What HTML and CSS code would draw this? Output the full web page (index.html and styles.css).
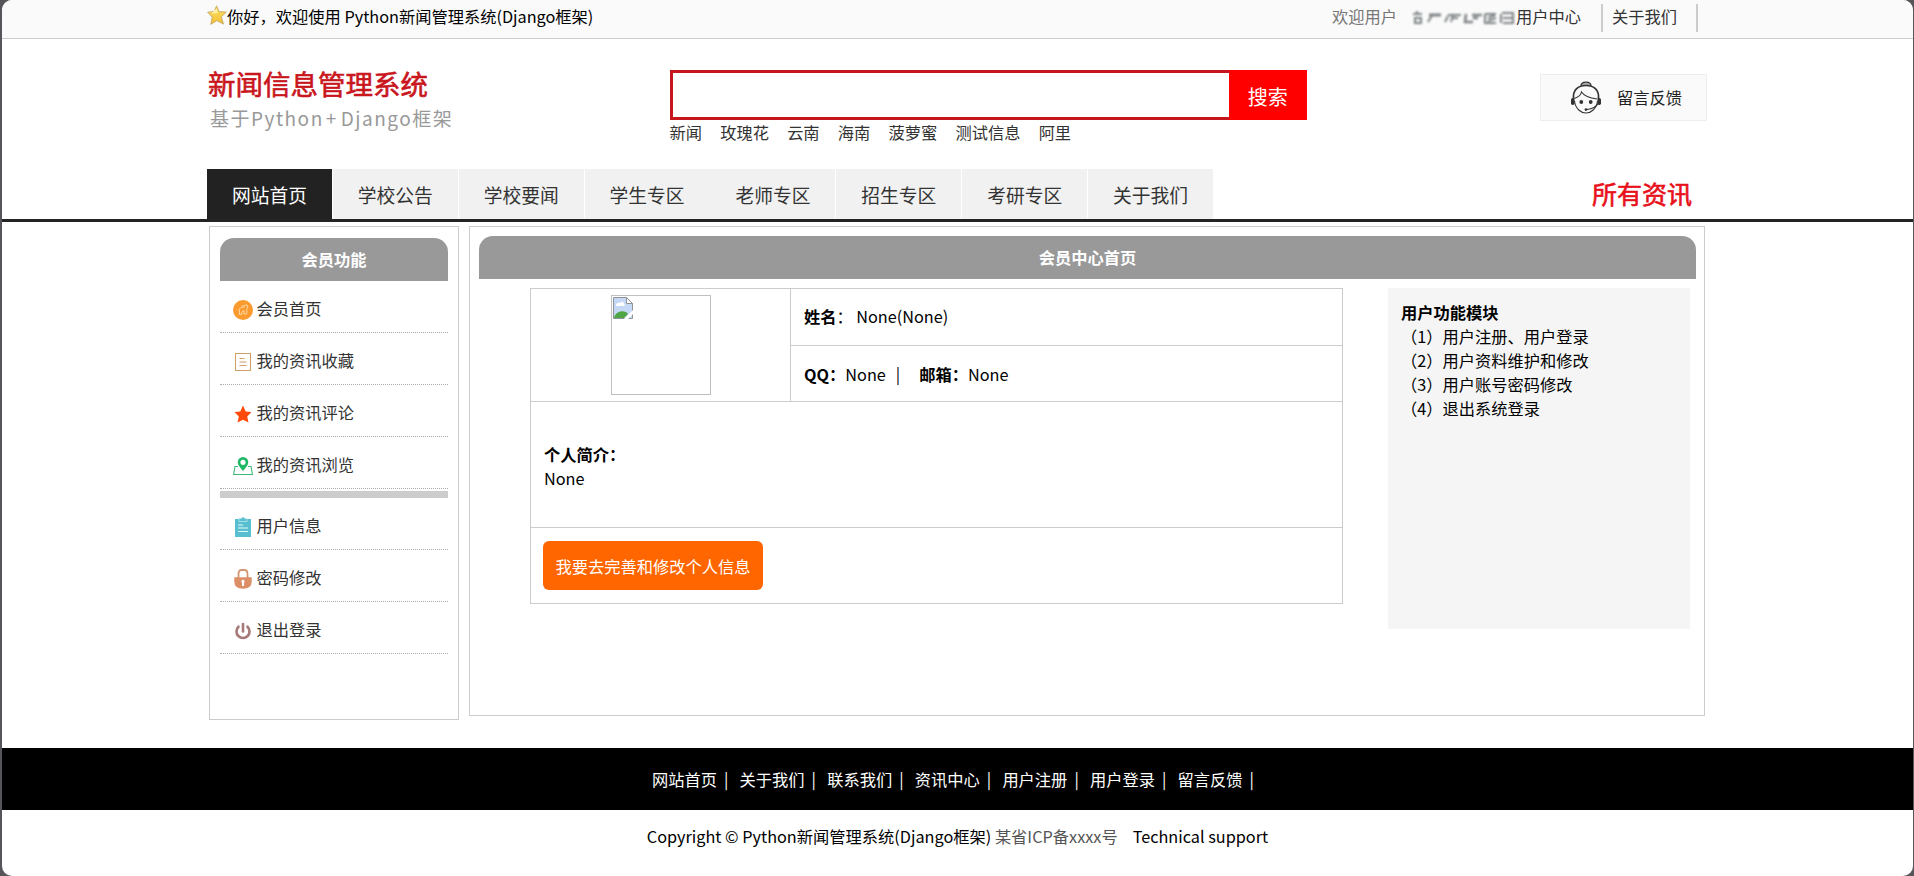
FILE: index.html
```html
<!DOCTYPE html>
<html lang="zh-CN">
<head>
<meta charset="utf-8">
<title>会员中心首页</title>
<link rel="stylesheet" href="styles.css">
</head>
<body>
<div class="window">
<div class="page">
  <div class="topbar">
    <div class="wrap topbar-in">
      <div class="hello">
        <svg class="star" viewBox="0 0 20 20"><defs><linearGradient id="gold" x1="0" y1="0" x2="0" y2="1"><stop offset="0" stop-color="#fbe36a"/><stop offset="1" stop-color="#f5bd30"/></linearGradient></defs><path d="M9.600 .8l2.500 5.900 7.200.3-5 4.900 2.200 7.200-6.700-3.500-6 3.700 1.500-7.200L.7 7.300l6.400-.8z" fill="url(#gold)" stroke="#c4a763" stroke-width=".9"/><path d="M9.500 3.500l1.300 4.600-6.500.3z" fill="#fff3a8"/></svg>
        <span>你好，欢迎使用 Python新闻管理系统(Django框架)</span>
      </div>
      <div class="user">
        <span class="welcome">欢迎用户</span>
        <svg class="smudge" viewBox="0 0 104 16"><g fill="none" stroke="#7d8284" stroke-width="2"><path d="M1 4h9M5 1v4M2 8h7v5H3V8" /><path d="M17 5h12" stroke-width="3"/><path d="M20 5l-4 7M33 12l3-6M36 5h13M41 5l-2 7M40 8h6"/><path d="M54 4l-1 8h8M60 5h10M61 8h5" stroke-width="2.500"/><path d="M73 4h11M73 4v9h11M76 8l7-3M76 11l8-3"/><path d="M90 3h11v10H91M91 8h9M89 4v9"/></g></svg>
        <a class="u1">用户中心</a><i class="bar"></i><a class="u2">关于我们</a><i class="bar"></i>
      </div>
    </div>
  </div>

  <div class="wrap header">
    <div class="logo"><div class="logo-t">新闻信息管理系统</div><div class="logo-s">基于Python<span>+</span>Django框架</div></div>
    <div class="search">
      <div class="search-row"><div class="search-input"></div><div class="search-btn">搜索</div></div>
      <div class="keys"><a>新闻</a><a>玫瑰花</a><a>云南</a><a>海南</a><a>菠萝蜜</a><a>测试信息</a><a>阿里</a></div>
    </div>
    <a class="feedback">
      <svg class="agent" viewBox="0 0 30 33"><g fill="none" stroke="#333"><path d="M2.600 18C1.500 9 7 4.500 15 4.500S28.500 9 27.400 18" stroke-width="1.700"/><path d="M10 5C10 -.3 20 -.3 20 5" stroke-width="1.300"/><path d="M11 3h8" stroke-width=".8"/><path d="M3.500 20c1 8 6.500 12 11.500 12s10.500-4 11.500-12" stroke-width="1.100"/><path d="M3.500 17.500c4-1.500 6.500-3.500 7-6.500 3 4.500 8 6 15.500 7" stroke-width="1.100"/><path d="M27 22.500c-2 4-6 5.500-11 6" stroke-width="1.200"/></g><g fill="#333"><rect x="0" y="17" width="3.600" height="7" rx="1.700"/><rect x="26.400" y="17" width="3.600" height="7" rx="1.700"/><circle cx="10.300" cy="21" r="1.900"/><circle cx="19.700" cy="21" r="1.900"/><circle cx="15" cy="28.600" r="1.400"/></g></svg>
      <span>留言反馈</span>
    </a>
  </div>

  <div class="nav">
    <div class="wrap nav-in">
      <div class="tabs"><a class="on">网站首页</a><a>学校公告</a><a>学校要闻</a><a>学生专区</a><a>老师专区</a><a>招生专区</a><a>考研专区</a><a>关于我们</a></div>
      <a class="all">所有资讯</a>
    </div>
  </div>

  <div class="content">
    <div class="side">
      <div class="title">会员功能</div>
      <div class="item"><svg viewBox="0 0 20 20"><circle cx="10" cy="10" r="10" fill="#fb9a2e"/><path d="M5 10.500L9.500 6l4.500-1.200.8 3-1 .8V14H11v-3.500L8.800 12v2.500H6.500V10M9 7.500l3-.7" fill="none" stroke="#ffdcaa" stroke-width=".9"/></svg>会员首页</div>
      <div class="item"><svg viewBox="0 0 20 20"><path d="M2.500 1.500h15v17h-15zM6.500 6.500h5M6.500 10h7M6.500 13.500h7" fill="none" stroke="#d2a06a" stroke-width="1.100"/></svg>我的资讯收藏</div>
      <div class="item"><svg viewBox="0 0 20 20"><path d="M10 1.500l2.700 5.900 5.800.7-4.300 4.400 1.300 5.900-5.500-2.600-5.500 2.600 1.300-5.900L1.500 8.100l5.800-.7z" fill="#ff4a0c"/></svg>我的资讯评论</div>
      <div class="item"><svg viewBox="0 0 20 20"><path d="M5 10.500H2L.6 18.500h18.800L18 10.500h-3" fill="none" stroke="#3cb878" stroke-width="1.100"/><path fill-rule="evenodd" d="M10 15C7 11.500 4.700 9 4.700 6.300a5.300 5.300 0 0 1 10.600 0C15.300 9 13 11.500 10 15zM10 3.700a2.600 2.600 0 1 0 0 5.200 2.600 2.600 0 0 0 0-5.200z" fill="#1fb866"/></svg>我的资讯浏览</div>
      <div class="split"></div>
      <div class="item"><svg viewBox="0 0 20 20"><path d="M2 2h16v18H2z" fill="#58bfd0"/><path d="M6 4.500V1.500h2.500a1.500 1.500 0 0 1 3 0H14v3z" fill="#58bfd0" stroke="#b9e6ec" stroke-width=".8"/><path d="M5 8h5M5 11h10M5 14.500h10" stroke="#e6fafc" stroke-width="1.200"/></svg>用户信息</div>
      <div class="item"><svg viewBox="0 0 20 20"><path d="M5.500 9V5q0-4 3-4h3q3 0 3 4v4" fill="none" stroke="#d4956f" stroke-width="1.800"/><path d="M1.300 8.200h17.400v4q0 7.500-8.700 7.500t-8.700-7.500z" fill="#dc8e66"/><path d="M10 10.800a1.700 1.700 0 0 1 1 3V17H9v-3.200a1.700 1.700 0 0 1 1-3z" fill="#fff"/></svg>密码修改</div>
      <div class="item"><svg viewBox="0 0 20 20"><path d="M5.500 5.800a6.500 6.500 0 1 0 9 0" fill="none" stroke="#a87b7b" stroke-width="2.700" stroke-linecap="round"/><path d="M10 3v7.500" stroke="#a87b7b" stroke-width="2.600" stroke-linecap="round"/></svg>退出登录</div>
    </div>

    <div class="main">
      <div class="title">会员中心首页</div>
      <div class="main-row">
        <div class="table">
          <div class="profile">
            <div class="photo"><div class="avatar">
              <svg width="20" height="22" viewBox="0 0 20 22"><path d="M.5.500h13l6 6v15H.500z" fill="#c5d8f5" stroke="#8f9499"/><path d="M3 8q1-3 4-2 3-3 4.500 1.500V9H3z" fill="#fff"/><path d="M1 21c1-7 11-9 14-4l-4 4z" fill="#4fa443"/><path d="M13.500.500v6h6z" fill="#fff" stroke="#8f9499"/><path d="M11 22l9-9v4l-5 5z" fill="#fff"/></svg>
            </div></div>
            <div class="facts">
              <div class="fact"><b>姓名</b>：<span class="v1">None(None)</span></div>
              <div class="fact"><b>QQ：</b>None<span class="pipe">|</span><b>邮箱：</b>None</div>
            </div>
          </div>
          <div class="intro"><b>个人简介：</b><div>None</div></div>
          <div class="act"><a class="btn">我要去完善和修改个人信息</a></div>
        </div>
        <div class="module">
          <b>用户功能模块</b>
          <div>（1）用户注册、用户登录</div>
          <div>（2）用户资料维护和修改</div>
          <div>（3）用户账号密码修改</div>
          <div>（4）退出系统登录</div>
        </div>
      </div>
    </div>
  </div>

  <div class="footer"><span>网站首页<i>|</i></span><span>关于我们<i>|</i></span><span>联系我们<i>|</i></span><span>资讯中心<i>|</i></span><span>用户注册<i>|</i></span><span>用户登录<i>|</i></span><span>留言反馈<i>|</i></span></div>
  <div class="copy">Copyright © Python新闻管理系统(Django框架) <a>某省ICP备xxxx号</a><span>Technical support</span></div>
</div>
</div>
</body>
</html>
```

FILE: styles.css
```css
* { box-sizing: border-box; }
body {
  margin: 0;
  font-family: "Noto Sans CJK SC", sans-serif;
  font-size: 16.25px;
  line-height: 24px;
  color: #000;
  white-space: nowrap;
}
svg { display: block; flex: none; }
i { font-style: normal; }
.window { height: 876px; padding: 0 1px 0 2px; background: #55555a; overflow: hidden; }
.page { height: 876px; background: #fff; border-radius: 10px; overflow: hidden; }
.wrap { width: 1500px; margin-left: 205px; display: flex; }

.topbar { height: 39px; background: #fafafa; border-bottom: 1px solid #ccc; }
.topbar-in { justify-content: space-between; }
.hello { display: flex; height: 32px; align-items: center; }
.star { width: 20px; height: 20px; margin-top: -3px; }
.user { display: flex; align-items: center; height: 32px; color: #333; margin-right: 9px; }
.welcome { color: #777; }
.smudge { width: 104px; height: 16px; margin: 3px 0 0 15px; filter: blur(.9px); }
.bar { width: 2px; height: 28px; background: #ccc; margin-top: 4px; }
.u1 { margin-right: 20px; }
.u2 { margin: 0 19px 0 9px; }

.header { height: 130px; }
.logo { width: 462.5px; padding-top: 23px; }
.logo-t { margin-left: 1px; font-size: 27.500px; line-height: 42px; color: #c9161d; -webkit-text-stroke: .6px #c9161d; }
.logo-s { margin-left: 3px; font-size: 19px; line-height: 28px; letter-spacing: 1.500px; color: #999; }
.logo-s span { margin: 0 3px 0 2px; }
.search { width: 637.5px; padding-top: 31px; }
.search-row { display: flex; height: 50px; }
.search-input { width: 559px; border: 3px solid #c4161c; border-right: 0; }
.search-btn { flex: 1; background: #f00; color: #fff; font-size: 20px; line-height: 54px; text-align: center; }
.keys { display: flex; gap: 18.200px; color: #333; }
.feedback { margin: 35px 0 0 auto; width: 167px; height: 47px; display: flex; align-items: center; gap: 16px; padding-left: 30px; background: #fafafa; border: 1px solid #eee; color: #222; }
.feedback span { padding-bottom: 1px; }
.agent { width: 30px; height: 33px; }

.nav { height: 53px; border-bottom: 3px solid #262324; }
.nav-in { justify-content: space-between; }
.tabs { display: flex; gap: .86px; }
.tabs a { width: 125px; height: 50px; line-height: 51.500px; text-align: center; font-size: 18.750px; color: #333; background: #f1f1f1; }
.tabs a.on { background: #222; color: #fff; }
.all { font-size: 25px; line-height: 49px; color: #e8101a; -webkit-text-stroke: .6px #e8101a; margin-right: 15px; }

.content { display: flex; align-items: flex-start; gap: 10px; padding: 4px 0 0 207px; height: 526px; }
.side { width: 250px; height: 494px; border: 1px solid #ccc; padding: 11px 10px 0; }
.title { height: 43px; line-height: 43px; border-radius: 14px 14px 0 0; background: #999; color: #fff; font-weight: 700; text-align: center; }
.item { height: 52px; display: flex; align-items: center; gap: 3.500px; padding: 3px 0 0 13px; border-bottom: 1px dotted #aaa; color: #333; }
.item svg { width: 20px; height: 20px; margin-top: 3px; }
.split { height: 7px; margin: 2px 0 0; background: #ccc; }
.main { width: 1236px; height: 490px; border: 1px solid #ccc; padding: 9px 8px 0 9px; }
.main-row { display: flex; padding: 9px 6px 0 51px; justify-content: space-between; }
.table { width: 813px; height: 316px; border: 1px solid #ccc; display: flex; flex-direction: column; }
.profile { display: flex; height: 113px; border-bottom: 1px solid #ccc; }
.photo { width: 260px; border-right: 1px solid #ccc; padding: 6px 0 0 80px; }
.avatar { width: 100px; height: 100px; border: 1px solid #c0c0c0; padding: 1px; }
.facts { flex: 1; }
.fact { height: 56px; line-height: 55px; padding-left: 13px; }
.fact + .fact { border-top: 1px solid #ccc; line-height: 57px; }
.v1 { margin-left: 3.500px; }
.pipe { margin: 0 19px 0 10px; }
.intro { height: 126px; border-bottom: 1px solid #ccc; padding: 40px 13px; }
.act { padding: 13px 12px; }
.btn { display: block; width: 220px; height: 49px; line-height: 50px; text-align: center; border-radius: 6px; background: #f60; color: #fff; }
.module { width: 302px; height: 341px; background: #f5f5f5; padding: 12px 13px; }

.footer { height: 62px; background: #000; color: #fff; display: flex; padding-left: 650px; line-height: 63px; }
.footer span { width: 87.600px; }
.footer i { margin-left: 7px; }
.copy { text-align: center; padding-top: 14px; }
.copy a { color: #555; }
.copy span { margin-left: 15px; }
```
